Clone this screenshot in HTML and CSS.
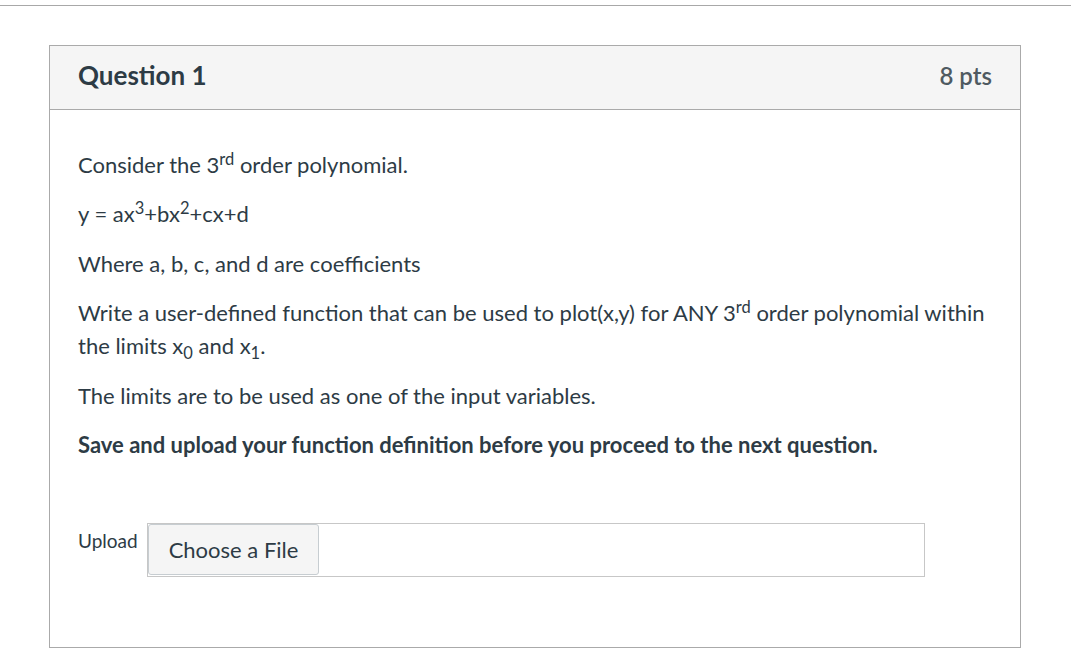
FILE: index.html
```html
<!DOCTYPE html>
<html>
<head>
<meta charset="utf-8">
<link rel="stylesheet" href="styles.css">
</head>
<body>
<div class="topline"></div>
<div class="card">
  <div class="card-header">
    <h2 class="title">Question 1</h2>
    <div class="pts">8 pts</div>
  </div>
  <div class="card-body">
    <p>Consider the 3<sup>rd</sup> order polynomial.</p>
    <p>y = ax<sup>3</sup>+bx<sup>2</sup>+cx+d</p>
    <p>Where a, b, c, and d are coefficients</p>
    <p>Write a user-defined function that can be used to plot(x,y) for ANY 3<sup>rd</sup> order polynomial within the limits x<sub>0</sub> and x<sub>1</sub>.</p>
    <p>The limits are to be used as one of the input variables.</p>
    <p><strong>Save and upload your function definition before you proceed to the next question.</strong></p>
    <div class="upload-row">
      <span class="upload-label">Upload</span>
      <div class="file-box">
        <button class="file-btn">Choose a File</button>
      </div>
    </div>
  </div>
</div>
</body>
</html>
```

FILE: styles.css
```css
html, body {
  margin: 0;
  padding: 0;
  background: #ffffff;
}
body {
  font-family: Lato, "Liberation Sans", sans-serif;
  color: #2d3b45;
}
.topline {
  margin-top: 5px;
  height: 1px;
  background: #a8a8a8;
}
.card {
  margin: 39px 0 0 49px;
  width: 970px;
  border: 1px solid #aaaaaa;
  height: 601px;
}
.card-header {
  display: flex;
  justify-content: space-between;
  align-items: center;
  box-sizing: border-box;
  height: 64px;
  background: #f5f5f5;
  border-bottom: 1px solid #aaaaaa;
  padding: 0 28px 5px 28px;
}
.title {
  margin: 0;
  font-size: 26px;
  font-weight: 700;
  color: #2d3b45;
}
.pts {
  font-size: 24px;
  font-weight: 600;
  color: #4f5a61;
}
.card-body {
  padding: 37.5px 28px 0 28px;
}
.card-body p {
  margin: 0 0 16.6px 0;
  font-size: 22px;
  line-height: 33px;
}
.card-body sup, .card-body sub {
  font-size: 0.75em;
  line-height: 0;
}
.card-body strong {
  font-weight: 700;
}
.upload-row {
  display: flex;
  align-items: flex-start;
  margin-top: 61.5px;
}
.upload-label {
  font-size: 19px;
  line-height: 22px;
  margin-top: 7px;
  width: 69px;
}
.file-box {
  width: 776px;
  height: 52px;
  border: 1px solid #c7c7c7;
  display: flex;
  align-items: center;
}
.file-btn {
  margin-left: 0;
  height: 51px;
  width: 171px;
  background: #f5f5f5;
  border: 1px solid #c7cdd1;
  border-radius: 3px;
  font-family: Lato, "Liberation Sans", sans-serif;
  font-size: 22px;
  color: #2d3b45;
  padding: 0;
}
```
